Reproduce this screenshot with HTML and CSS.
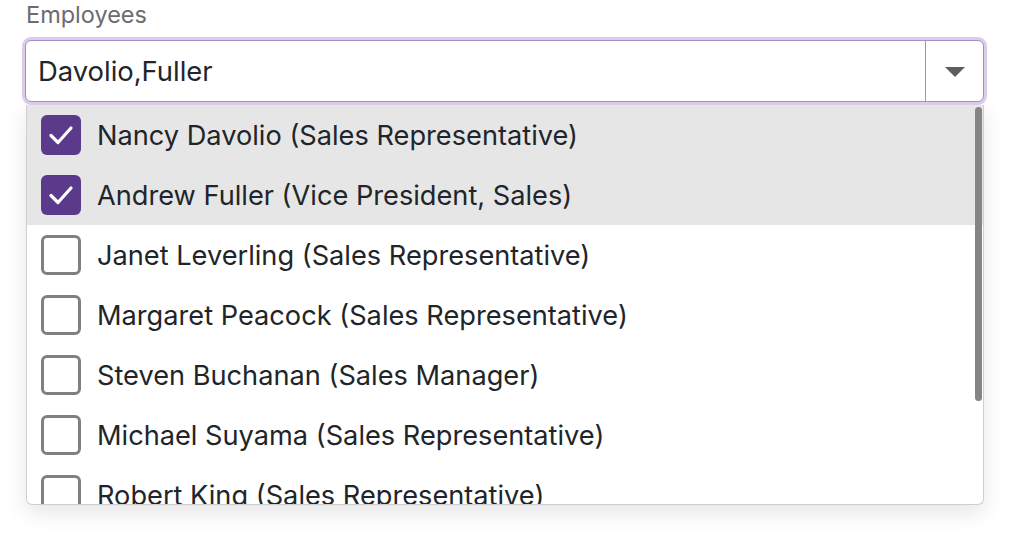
FILE: index.html
```html
<!DOCTYPE html>
<html>
<head>
<meta charset="utf-8">
<link rel="stylesheet" href="styles.css">
</head>
<body>
<div class="field">
  <div class="label">Employees</div>
  <div class="combo">
    <div class="value">Davolio,Fuller</div>
    <div class="toggle"><span class="caret"></span></div>
  </div>
  <div class="popup">
    <div class="list">
      <div class="item selected"><span class="box checked"><svg viewBox="0 0 40 40" width="40" height="40"><path d="M10 20.5 L17 27.5 L30 13" fill="none" stroke="#fff" stroke-width="3.2" stroke-linecap="round" stroke-linejoin="round"/></svg></span><span class="text">Nancy Davolio (Sales Representative)</span></div>
      <div class="item selected"><span class="box checked"><svg viewBox="0 0 40 40" width="40" height="40"><path d="M10 20.5 L17 27.5 L30 13" fill="none" stroke="#fff" stroke-width="3.2" stroke-linecap="round" stroke-linejoin="round"/></svg></span><span class="text">Andrew Fuller (Vice President, Sales)</span></div>
      <div class="item"><span class="box"></span><span class="text">Janet Leverling (Sales Representative)</span></div>
      <div class="item"><span class="box"></span><span class="text">Margaret Peacock (Sales Representative)</span></div>
      <div class="item"><span class="box"></span><span class="text">Steven Buchanan (Sales Manager)</span></div>
      <div class="item"><span class="box"></span><span class="text">Michael Suyama (Sales Representative)</span></div>
      <div class="item"><span class="box"></span><span class="text">Robert King (Sales Representative)</span></div>
    </div>
    <div class="scrollbar"></div>
  </div>
</div>
</body>
</html>
```
FILE: styles.css
```css
* { box-sizing: border-box; }
html, body { margin: 0; padding: 0; background: #fff; }
body {
  font-family: Inter, "Liberation Sans", sans-serif;
  color: #212529;
  width: 1009px;
  height: 551px;
  overflow: hidden;
}
.field {
  padding: 1px 0 0 25px;
  width: 984px;
}
.label {
  font-size: 23.5px;
  line-height: 28px;
  color: #6c6c70;
  padding-left: 1px;
  margin-bottom: 11px;
}
.combo {
  display: flex;
  height: 62px;
  border: 1.5px solid #a68dc6;
  border-radius: 6px;
  box-shadow: 0 0 0 3px #d9cde8;
  background: #fff;
  position: relative;
  z-index: 2;
}
.value {
  flex: 1;
  display: flex;
  align-items: center;
  padding-left: 12px;
  font-size: 27.4px;
  color: #212529;
}
.toggle {
  width: 58px;
  border-left: 1.5px solid #a68dc6;
  display: flex;
  align-items: center;
  justify-content: center;
}
.caret {
  width: 0;
  height: 0;
  border-left: 10px solid transparent;
  border-right: 10px solid transparent;
  border-top: 10px solid #5e5e62;
  margin-top: 2px;
}
.popup {
  position: relative;
  margin: 3px 0 0 1px;
  height: 400px;
  border: 1px solid #cfcfcf;
  border-top: none;
  border-radius: 0 0 6px 6px;
  overflow: hidden;
  box-shadow: 0 8px 22px rgba(0,0,0,0.10);
  background: #fff;
}
.item {
  height: 60px;
  display: flex;
  align-items: center;
  padding-left: 14px;
  gap: 16px;
  font-size: 27.2px;
  color: #212529;
}
.item.selected { background: #e6e6e6; }
.box {
  width: 40px;
  height: 40px;
  border: 3.5px solid #808080;
  border-radius: 6px;
  background: #fff;
  flex: none;
  position: relative;
}
.box.checked {
  background: #5b3a8c;
  border: none;
}
.box svg { display: block; }
.scrollbar {
  position: absolute;
  right: 1px;
  top: 2px;
  width: 7px;
  height: 294px;
  border-radius: 4px;
  background: #858585;
}
```
